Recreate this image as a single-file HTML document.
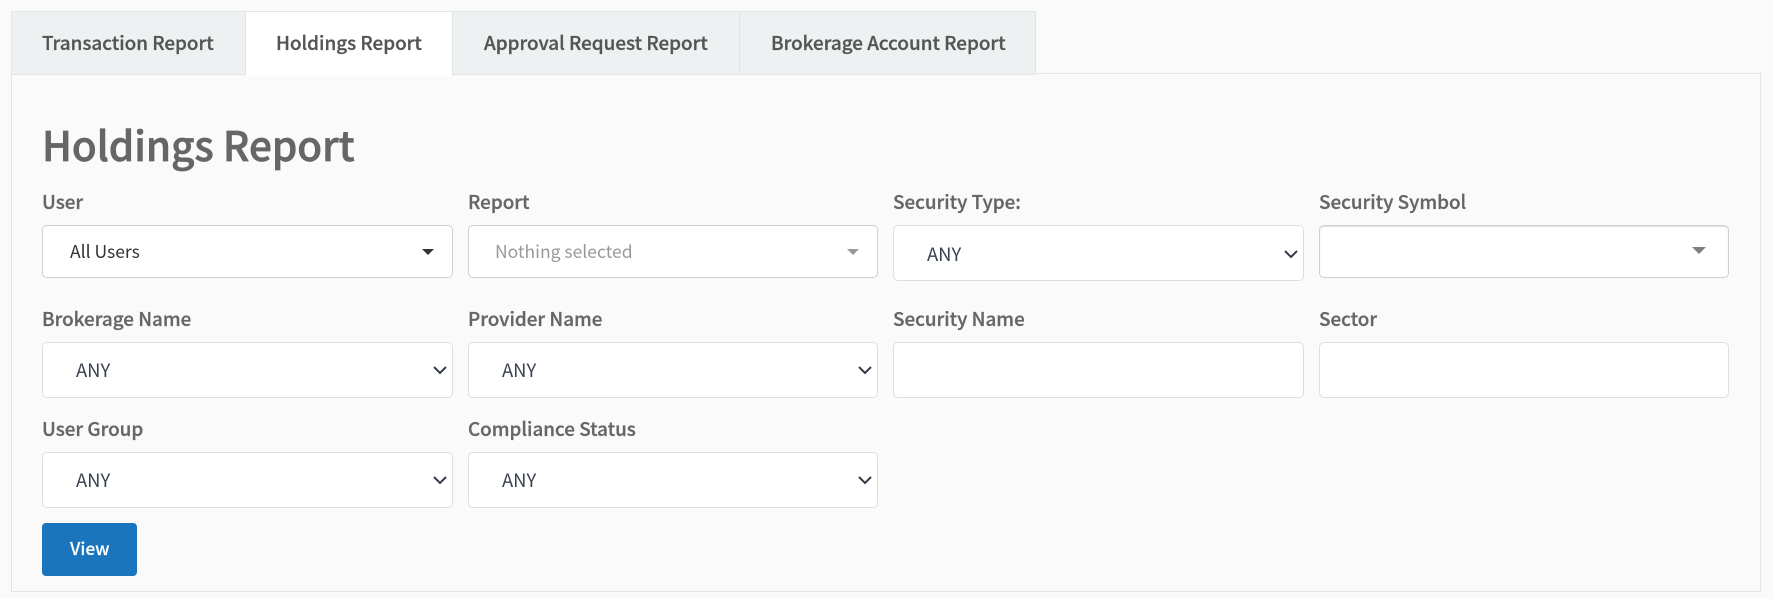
<!DOCTYPE html>
<html lang="en">
<head>
<meta charset="utf-8">
<title>Holdings Report</title>
<style>
html,body{margin:0;padding:0;width:1773px;height:599px;overflow:hidden;background:#fafafa}
body{position:relative;font-family:"Noto Sans CJK SC","Liberation Sans",sans-serif;color:#666}
.a{position:absolute}
.t{position:absolute;white-space:nowrap;line-height:30px;height:30px}
.panel{left:11px;top:73px;width:1748px;height:517px;border:1px solid #e0e5e7;background:#fafafa;box-sizing:content-box}
.tab{position:absolute;top:11px;height:62px;border:1px solid #e0e6e8;background:#edf1f2;box-sizing:content-box}
.tab.on{background:#fff;height:64px;border-bottom:0;z-index:2}
.tt{font-size:18.85px;color:#555;font-weight:500;z-index:3;-webkit-text-stroke:.3px #555}
.l{font-size:18.85px;color:#666;font-weight:500;-webkit-text-stroke:.3px #666}
.box{position:absolute;background:#fff;border:1px solid #dedede;border-radius:5px;box-sizing:border-box}
.bs{border-color:#cfcfcf}
.v{font-size:17.5px;color:#3a4250}
.any{font-size:18.4px}
svg{position:absolute;overflow:visible}
</style>
</head>
<body>
<div class="a panel"></div>
<div class="tab" style="left:11px;width:233px"></div>
<div class="tab on" style="left:245px;width:206px"></div>
<div class="tab" style="left:452px;width:286px"></div>
<div class="tab" style="left:739px;width:295px"></div>
<div class="t tt" style="left:42px;top:28px">Transaction Report</div>
<div class="t tt" style="left:276px;top:28px">Holdings Report</div>
<div class="t tt" style="left:484px;top:28px">Approval Request Report</div>
<div class="t tt" style="left:771px;top:28px">Brokerage Account Report</div>

<div class="t" style="left:42px;top:129px;font-size:40.4px;line-height:30px;color:#666;font-weight:500;-webkit-text-stroke:.7px #666">Holdings Report</div>

<div class="t l" style="left:42px;top:187px">User</div>
<div class="t l" style="left:468px;top:187px">Report</div>
<div class="t l" style="left:893px;top:187px">Security Type:</div>
<div class="t l" style="left:1319px;top:187px">Security Symbol</div>

<div class="box bs" style="left:42px;top:225px;width:411px;height:53px"></div>
<div class="t v" style="left:70px;top:237px;color:#333">All Users</div>
<svg style="left:0;top:0" width="1" height="1"><path d="M422 249h12l-6 6z" fill="#333"/></svg>

<div class="box bs" style="left:468px;top:225px;width:410px;height:53px"></div>
<div class="t v" style="left:495px;top:237px;color:#999">Nothing selected</div>
<svg style="left:0;top:0" width="1" height="1"><path d="M847 249h12l-6 6z" fill="#999"/></svg>

<div class="box" style="left:893px;top:225px;width:411px;height:56px"></div>
<div class="t v any" style="left:927px;top:239px">ANY</div>
<svg style="left:0;top:0" width="1" height="1"><path d="M1285 251l6 6 6-6" fill="none" stroke="#343a4a" stroke-width="2"/></svg>

<div class="box bs" style="left:1319px;top:225px;width:410px;height:53px;box-shadow:inset 0 1px 1px rgba(0,0,0,.12)"></div>
<svg style="left:0;top:0" width="1" height="1"><path d="M1692 247h14l-7 7z" fill="#808080"/></svg>

<div class="t l" style="left:42px;top:304px">Brokerage Name</div>
<div class="t l" style="left:468px;top:304px">Provider Name</div>
<div class="t l" style="left:893px;top:304px">Security Name</div>
<div class="t l" style="left:1319px;top:304px">Sector</div>

<div class="box" style="left:42px;top:342px;width:411px;height:56px"></div>
<div class="t v any" style="left:76px;top:355px">ANY</div>
<svg style="left:0;top:0" width="1" height="1"><path d="M434 367l6 6 6-6" fill="none" stroke="#343a4a" stroke-width="2"/></svg>

<div class="box" style="left:468px;top:342px;width:410px;height:56px"></div>
<div class="t v any" style="left:502px;top:355px">ANY</div>
<svg style="left:0;top:0" width="1" height="1"><path d="M859 367l6 6 6-6" fill="none" stroke="#343a4a" stroke-width="2"/></svg>

<div class="box" style="left:893px;top:342px;width:411px;height:56px"></div>
<div class="box" style="left:1319px;top:342px;width:410px;height:56px"></div>

<div class="t l" style="left:42px;top:414px">User Group</div>
<div class="t l" style="left:468px;top:414px">Compliance Status</div>

<div class="box" style="left:42px;top:452px;width:411px;height:56px"></div>
<div class="t v any" style="left:76px;top:465px">ANY</div>
<svg style="left:0;top:0" width="1" height="1"><path d="M434 477l6 6 6-6" fill="none" stroke="#343a4a" stroke-width="2"/></svg>

<div class="box" style="left:468px;top:452px;width:410px;height:56px"></div>
<div class="t v any" style="left:502px;top:465px">ANY</div>
<svg style="left:0;top:0" width="1" height="1"><path d="M859 477l6 6 6-6" fill="none" stroke="#343a4a" stroke-width="2"/></svg>

<div class="a" style="left:42px;top:523px;width:95px;height:53px;background:#1a75bc;border-radius:4px"></div>
<div class="t" style="left:70px;top:534px;font-size:17.4px;color:#fff;font-weight:500;-webkit-text-stroke:.15px #fff">View</div>
</body>
</html>
